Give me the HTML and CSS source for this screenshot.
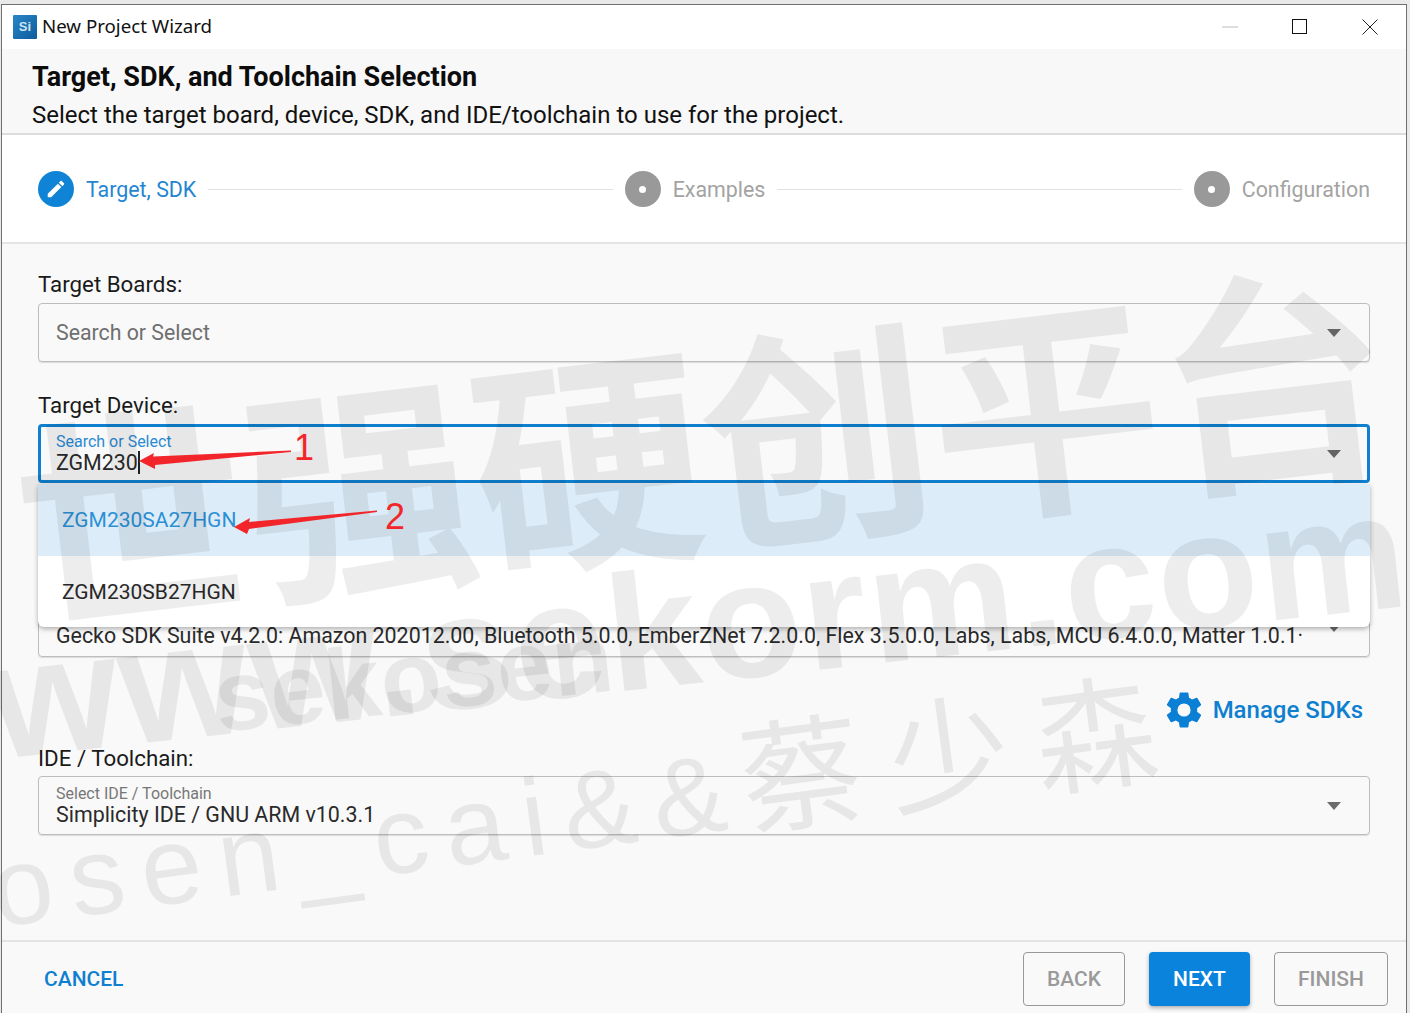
FILE: index.html
```html
<!DOCTYPE html>
<html lang="en">
<head>
<meta charset="utf-8">
<title>New Project Wizard</title>
<link rel="stylesheet" href="styles.css">
</head>
<body>
<div class="window">
  <div class="titlebar">
    <span class="logo">Si</span>
    <span class="wintitle">New Project Wizard</span>
    <span class="winbtns">
      <svg class="wbtn" viewBox="0 0 16 16"><path d="M0 8H16" stroke="#bbb" fill="none"/></svg>
      <svg class="wbtn" viewBox="0 0 16 16"><rect x=".5" y=".5" width="14" height="14" stroke="#111" fill="none"/></svg>
      <svg class="wbtn" viewBox="0 0 16 16"><path d="M.5.5 15.5 15.5M15.5.5.5 15.5" stroke="#222" fill="none"/></svg>
    </span>
  </div>
  <header class="head">
    <h1>Target, SDK, and Toolchain Selection</h1>
    <p>Select the target board, device, SDK, and IDE/toolchain to use for the project.</p>
  </header>
  <nav class="stepper">
    <span class="dot active"><svg viewBox="0 0 24 24" width="22" height="22"><path fill="#fff" d="M3 17.25V21h3.75L17.81 9.94l-3.75-3.75L3 17.25zM20.71 7.04a1 1 0 0 0 0-1.41l-2.34-2.34a1 1 0 0 0-1.41 0l-1.83 1.83 3.75 3.75 1.83-1.83z"/></svg></span>
    <span class="steplabel active">Target, SDK</span>
    <span class="stepline"></span>
    <span class="dot"><i></i></span>
    <span class="steplabel">Examples</span>
    <span class="stepline"></span>
    <span class="dot"><i></i></span>
    <span class="steplabel">Configuration</span>
  </nav>
  <main class="form">
    <label class="lbl">Target Boards:</label>
    <div class="field">
      <span class="placeholder">Search or Select</span>
      <span class="caret"></span>
    </div>
    <label class="lbl gap">Target Device:</label>
    <div class="field focus">
      <div class="stack">
        <span class="mini blue">Search or Select</span>
        <span class="val">ZGM230<b class="cursor"></b></span>
      </div>
      <span class="caret"></span>
    </div>
    <div class="sdkfield field">
      <span class="val clip">Gecko SDK Suite v4.2.0: Amazon 202012.00, Bluetooth 5.0.0, EmberZNet 7.2.0.0, Flex 3.5.0.0, Labs, Labs, MCU 6.4.0.0, Matter 1.0.1·</span>
      <span class="caret"></span>
    </div>
    <div class="manage">
      <svg viewBox="0 0 24 24" width="44" height="44"><path fill="#0a7fd4" d="M19.14 12.94c.04-.3.06-.61.06-.94 0-.32-.02-.64-.07-.94l2.03-1.58a.49.49 0 0 0 .12-.61l-1.92-3.32a.49.49 0 0 0-.59-.22l-2.39.96a7 7 0 0 0-1.62-.94l-.36-2.54a.48.48 0 0 0-.48-.41h-3.84a.47.47 0 0 0-.47.41l-.36 2.54c-.59.24-1.13.57-1.62.94l-2.39-.96a.48.48 0 0 0-.59.22L2.73 8.87a.47.47 0 0 0 .12.61l2.03 1.58c-.05.3-.09.63-.09.94s.02.64.07.94l-2.03 1.58a.49.49 0 0 0-.12.61l1.92 3.32c.12.22.37.29.59.22l2.39-.96c.5.38 1.03.7 1.62.94l.36 2.54c.05.24.24.41.48.41h3.84c.24 0 .44-.17.47-.41l.36-2.54a7 7 0 0 0 1.62-.94l2.39.96c.22.08.47 0 .59-.22l1.92-3.32a.47.47 0 0 0-.12-.61l-2.01-1.58zM12 15.6A3.6 3.6 0 1 1 12 8.4a3.6 3.6 0 0 1 0 7.2z"/></svg>
      <span>Manage SDKs</span>
    </div>
    <label class="lbl tight">IDE / Toolchain:</label>
    <div class="field">
      <div class="stack">
        <span class="mini">Select IDE / Toolchain</span>
        <span class="val">Simplicity IDE / GNU ARM v10.3.1</span>
      </div>
      <span class="caret"></span>
    </div>
  </main>
  <footer class="foot">
    <span class="cancel">CANCEL</span>
    <span class="btn outline back">BACK</span>
    <span class="btn primary">NEXT</span>
    <span class="btn outline">FINISH</span>
  </footer>
</div>
<ul class="menu">
  <li class="sel">ZGM230SA27HGN</li>
  <li>ZGM230SB27HGN</li>
</ul>
<div class="wm wm1">世强硬创平台</div>
<div class="wm wm2">www.sekorm.com</div>
<div class="wm wm3">osen_cai&amp;&amp;<span class="wmcjk">蔡少森</span></div>
<div class="wm wm4">sekosen</div>
<svg class="notes" width="1410" height="1013" viewBox="0 0 1410 1013">
  <path fill="#f2262a" d="M139 461 L154 453 L153 456.500 L291 450.500 L291 452 L155 465 L155 469Z"/>
  <path fill="#f2262a" d="M234 527 L250 518 L249 522 L377 510.500 L377 512 L249 529 L247 534Z"/>
  <text class="num" x="294" y="460">1</text>
  <text class="num" x="385" y="529">2</text>
</svg>
</body>
</html>
```
FILE: styles.css
```css
* { box-sizing: border-box; }
html, body { margin: 0; height: 100%; overflow: hidden; }
body { background: #e9e9e9; font-family: Roboto, "Noto Sans", sans-serif; color: #222; position: relative; padding: 4px 3px 0 1px; }
.window { height: 1009px; border: 1px solid #6f6f6f; border-bottom: 0; background: #f9f9f9; display: flex; flex-direction: column; }
.titlebar { height: 44px; background: #fff; display: flex; align-items: center; padding-left: 11px; flex: none; }
.logo { width: 24px; height: 24px; background: linear-gradient(135deg, #2b86c5, #0d5c9e); color: #cfe4f3; font: bold 13px/24px "Liberation Sans", sans-serif; text-align: center; border-radius: 1px; }
.wintitle { margin: -4px 0 0 5px; font: 18.7px "Noto Sans", Roboto, sans-serif; color: #111; }
.winbtns { margin-left: auto; display: flex; align-items: center; gap: 54px; padding-right: 28px; }
.wbtn { width: 16px; height: 16px; display: block; }
.head { height: 86px; flex: none; background: #f8f8f8; border-bottom: 2px solid #ddd; padding: 11px 30px 0; }
.head h1 { margin: 0; font-size: 27px; line-height: 34px; font-weight: 700; color: #0c0c0c; }
.head p { margin: 5px 0 0; font-size: 24px; line-height: 32px; color: #111; }
.stepper { height: 109px; flex: none; background: #fff; border-bottom: 2px solid #e4e4e4; display: flex; align-items: center; padding: 1px 36px 0; }
.dot { width: 36px; height: 36px; border-radius: 50%; background: #999; display: flex; align-items: center; justify-content: center; flex: none; }
.dot i { width: 7px; height: 7px; background: #fff; border-radius: 50%; }
.dot.active { background: #0f84d6; }
.steplabel { margin-left: 12px; font-size: 21.4px; color: #a3a3a3; white-space: nowrap; }
.steplabel.active { color: #1f86d2; }
.stepline { flex: 1; height: 1px; background: #e2e2e2; margin: 0 12px; }
.form { flex: 1; padding: 28px 36px 0 36px; }
.lbl { display: block; font-size: 22.3px; line-height: 24px; margin-bottom: 7px; color: #1a1a1a; }
.lbl.gap { margin-top: 31px; }
.lbl.tight { margin-bottom: 6px; }
.field { height: 59px; border: 1px solid #bdbdbd; border-radius: 4px; display: flex; align-items: center; padding: 0 17px; position: relative; box-shadow: 0 1px 1px rgba(0,0,0,.12); }
.field.focus { border: 3px solid #0f7fd0; padding-left: 15px; box-shadow: none; }
.placeholder { font-size: 21.3px; color: #6f6f6f; }
.stack { display: flex; flex-direction: column; padding-top: 1px; }
.mini { font-size: 16px; line-height: 17px; color: #777; }
.mini.blue { color: #2a8ad4; }
.val { font-size: 21.4px; line-height: 26px; color: #2a2a2a; white-space: nowrap; }
.clip { overflow: hidden; width: 1246px; }
.cursor { display: inline-block; width: 2px; height: 23px; background: #222; vertical-align: -4px; }
.caret { position: absolute; right: 28px; top: 50%; margin-top: -4px; border-left: 7.5px solid transparent; border-right: 7.5px solid transparent; border-top: 8px solid #6b6b6b; }
.focus .caret { right: 26px; }
.sdkfield { margin-top: 115px; padding-top: 16px; }
.manage { height: 36px; margin-top: 35px; margin-bottom: 18px; display: flex; align-items: center; justify-content: flex-end; gap: 7px; padding-right: 7px; font-size: 24px; font-weight: 500; color: #0f7fd0; }
.foot { height: 73px; flex: none; border-top: 2px solid #e4e4e4; display: flex; align-items: center; padding: 3px 18px 0 42px; gap: 24px; font-weight: 500; font-size: 21px; }
.cancel { margin-right: auto; color: #0f7fd0; }
.btn { height: 54px; display: flex; align-items: center; justify-content: center; border-radius: 4px; }
.outline { border: 1px solid #999; color: #9a9a9a; width: 114px; }
.back { width: 102px; }
.primary { width: 101px; background: #0a83dc; color: #fff; box-shadow: 0 2px 4px rgba(0,0,0,.3); }
.menu { position: absolute; left: 38px; top: 484px; width: 1332px; height: 143px; margin: 0; padding: 0; list-style: none; background: #fff; border-radius: 0 0 6px 6px; box-shadow: 0 2px 5px rgba(0,0,0,.3); }
.menu li { height: 72px; line-height: 72px; padding-left: 24px; font-size: 21px; color: #2a2a2a; }
.menu li.sel { background: #dcecf8; color: #2c90d6; }
.wm { position: absolute; white-space: nowrap; pointer-events: none; color: rgba(0,0,0,.07); transform-origin: 0 100%; }
.wm1 { left: 30px; top: 390px; font: 700 230px/1.1 "Noto Sans CJK SC", sans-serif; transform: rotate(-6.7deg); }
.wm2 { left: 0; top: 612px; font: 700 165px/1.1 "Liberation Sans", sans-serif; letter-spacing: 2px; transform: rotate(-6.2deg); }
.wm3 { left: 0; top: 818px; font: 110px/1.1 "Liberation Sans", "Noto Sans CJK SC", sans-serif; letter-spacing: 17px; transform: rotate(-7.6deg); }
.wmcjk { font-size: 122px; letter-spacing: 26px; }
.wm4 { left: 220px; top: 642px; font: 700 100px/1.1 "Liberation Sans", sans-serif; transform: rotate(-6deg); }
.notes { position: absolute; left: 0; top: 0; pointer-events: none; }
.num { font: 36px "Liberation Sans", sans-serif; fill: #f2262a; }
```
